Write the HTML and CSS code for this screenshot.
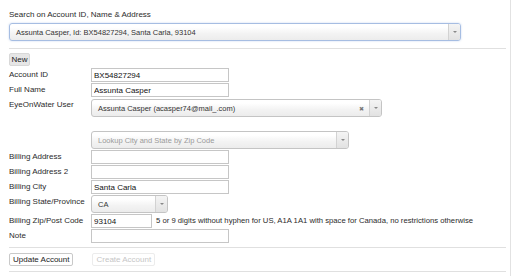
FILE: index.html
```html
<!DOCTYPE html>
<html lang="en">
<head>
    <meta charset="UTF-8">
    <title>Account</title>
    <link rel="stylesheet" href="styles.css">
</head>
<body>

<div class="page">
    <div class="search">
        <label class="search-label">Search on Account ID, Name &amp; Address</label>
        <div class="chosen chosen-focus search-box">
            <span class="chosen-text">Assunta Casper, Id: BX54827294, Santa Carla, 93104</span>
            <span class="chosen-arrow"><i class="tri"></i></span>
        </div>
    </div>

    <hr class="rule">

    <button type="button" class="btn btn-new">New</button>

    <form class="account-form">
        <div class="row">
            <label>Account ID</label>
            <input type="text" class="field" value="BX54827294">
        </div>
        <div class="row">
            <label>Full Name</label>
            <input type="text" class="field" value="Assunta Casper">
        </div>
        <div class="row">
            <label>EyeOnWater User</label>
            <div class="chosen user-box">
                <span class="chosen-text">Assunta Casper (acasper74@mail_.com)</span>
                <span class="chosen-clear">&#x2716;</span>
                <span class="chosen-arrow"><i class="tri"></i></span>
            </div>
        </div>
        <div class="row row-lookup">
            <label></label>
            <div class="chosen lookup-box">
                <span class="chosen-text placeholder">Lookup City and State by Zip Code</span>
                <span class="chosen-arrow"><i class="tri"></i></span>
            </div>
        </div>
        <div class="row">
            <label>Billing Address</label>
            <input type="text" class="field" value="">
        </div>
        <div class="row">
            <label>Billing Address 2</label>
            <input type="text" class="field" value="">
        </div>
        <div class="row">
            <label>Billing City</label>
            <input type="text" class="field" value="Santa Carla">
        </div>
        <div class="row">
            <label>Billing State/Province</label>
            <div class="chosen state-box">
                <span class="chosen-text">CA</span>
                <span class="chosen-arrow"><i class="tri"></i></span>
            </div>
        </div>
        <div class="row">
            <label>Billing Zip/Post Code</label>
            <input type="text" class="field field-zip" value="93104">
            <span class="help">5 or 9 digits without hyphen for US, A1A 1A1 with space for Canada, no restrictions otherwise</span>
        </div>
        <div class="row">
            <label>Note</label>
            <input type="text" class="field" value="">
        </div>
    </form>

    <hr class="rule">

    <div class="actions">
        <button type="button" class="btn">Update Account</button>
        <button type="button" class="btn" disabled>Create Account</button>
    </div>

    <hr class="rule">
</div>

</body>
</html>
```

FILE: styles.css
```css
body {
    margin: 0;
    background-color: #fff;
    font-family: "Liberation Sans", Arial, sans-serif;
    font-size: 8px;
    color: #2b2b2b;
}
.page {
    height: 276px;
    padding: 10px 0 0 9px;
    box-sizing: border-box;
    width: 511px;
    border-right: 1px solid #e2e2e2;
}
.search-label {
    display: block;
    line-height: 10px;
    margin-bottom: 3px;
}
.rule {
    border: none;
    border-top: 1px solid #e0e0e0;
    margin: 0;
    width: 497px;
}
.search + .rule {
    margin-top: 7px;
}

/* chosen-like select */
.chosen {
    display: flex;
    align-items: center;
    box-sizing: border-box;
    height: 18px;
    border: 1px solid #c4c4c4;
    border-radius: 3px;
    background: linear-gradient(#fff 20%, #f3f3f3 60%, #ececec);
}
.chosen-focus {
    border-color: #a6bde2;
    box-shadow: 0 0 2px rgba(80, 130, 210, 0.35);
}
.chosen-text {
    flex: 1;
    padding-left: 6px;
    font-size: 7.5px;
    color: #333;
    white-space: nowrap;
    overflow: hidden;
}
.placeholder {
    color: #9a9a9a;
}
.chosen-clear {
    font-size: 6px;
    color: #777;
    margin-right: 5px;
}
.chosen-arrow {
    width: 11px;
    height: 100%;
    border-left: 1px solid #d2d2d2;
    display: flex;
    align-items: center;
    justify-content: center;
    background: linear-gradient(#f4f4f4, #e2e2e2);
    border-radius: 0 2px 2px 0;
}
.tri {
    width: 0;
    height: 0;
    border-left: 2px solid transparent;
    border-right: 2px solid transparent;
    border-top: 2px solid #888;
}
.search-box {
    width: 452px;
}

.btn {
    font-family: inherit;
    font-size: 8px;
    color: #222;
    height: 13px;
    line-height: 11px;
    padding: 0 3px;
    border: 1px solid #c9c9c9;
    border-radius: 2px;
    background: #fff;
}
.btn-new {
    margin-top: 4px;
    background: #e6e6e6;
    border-color: #d8d8d8;
    width: 21px;
    padding: 0;
}
.btn:disabled {
    color: #c6c6c6;
    border-color: #ececec;
}

.account-form {
    margin-top: 2px;
    display: flex;
    flex-direction: column;
    gap: 1px;
    margin-bottom: 4px;
}
.row {
    display: flex;
    align-items: flex-start;
}
.row label {
    width: 82px;
    flex: none;
    line-height: 10px;
    padding-top: 2px;
}
.field {
    box-sizing: border-box;
    width: 138px;
    height: 14px;
    border: 1px solid #c6c6c6;
    padding: 0 2px;
    font-family: inherit;
    font-size: 8px;
    color: #111;
    margin: 0;
}
.field-zip {
    width: 61px;
}
.help {
    margin-left: 4px;
    line-height: 14px;
    font-size: 7.7px;
}
.user-box {
    width: 291px;
    margin-top: 1px;
}
.row-lookup {
    margin-top: 13px;
}
.lookup-box {
    width: 258px;
}
.state-box {
    width: 77px;
}
.actions {
    display: flex;
    gap: 19px;
    padding: 5px 0;
}
```
